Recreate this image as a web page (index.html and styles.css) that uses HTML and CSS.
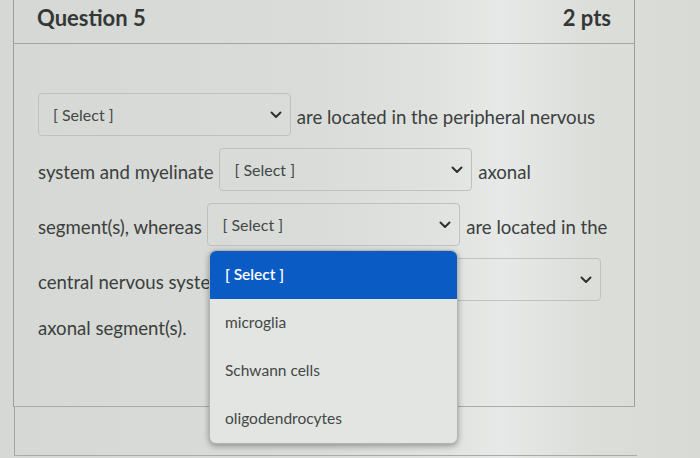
FILE: index.html
```html
<!DOCTYPE html>
<html lang="en">
<head>
<meta charset="utf-8">
<title>Question 5</title>
<link rel="stylesheet" href="styles.css">
</head>
<body>
<div class="card">
  <div class="card-header">
    <span class="title">Question 5</span>
    <span class="pts">2 pts</span>
  </div>
  <div class="card-body">
    <p class="question"><span class="select first"><span class="label">[ Select ]</span><svg class="chev" width="12" height="8" viewBox="0 0 12 8"><polyline points="1.5,1.5 6,6 10.5,1.5"/></svg></span> are located in the peripheral nervous system and myelinate <span class="select"><span class="label">[ Select ]</span><svg class="chev" width="12" height="8" viewBox="0 0 12 8"><polyline points="1.5,1.5 6,6 10.5,1.5"/></svg></span> axonal segment(s), whereas <span class="select"><span class="label">[ Select ]</span><svg class="chev" width="12" height="8" viewBox="0 0 12 8"><polyline points="1.5,1.5 6,6 10.5,1.5"/></svg></span> are located in the central nervous system <span class="select wide"><span class="label"></span><svg class="chev" width="12" height="8" viewBox="0 0 12 8"><polyline points="1.5,1.5 6,6 10.5,1.5"/></svg></span> axonal segment(s).</p>
  </div>
  <ul class="menu">
    <li class="menu-item active">[ Select ]</li>
    <li class="menu-item">microglia</li>
    <li class="menu-item">Schwann cells</li>
    <li class="menu-item">oligodendrocytes</li>
  </ul>
</div>
<div class="card-footer"></div>
</body>
</html>
```

FILE: styles.css
```css
html, body {
  margin: 0;
  padding: 0;
}

body {
  width: 700px;
  height: 458px;
  overflow: hidden;
  font-family: Lato, "Open Sans", sans-serif;
  color: #3b3f3d;
  background: linear-gradient(90deg, #d5d8d4 0%, #d9dcd8 45%, #dfe2de 62%, #e7e9e8 72%, #dcdeda 84%, #d8dad6 100%);
}

.card {
  position: relative;
  margin-left: 13px;
  width: 620px;
  border-left: 1px solid #9d9f9c;
  border-right: 1px solid #9d9f9c;
  border-bottom: 1px solid #a9aba8;
}

.card-header {
  box-sizing: border-box;
  height: 44px;
  display: flex;
  justify-content: space-between;
  align-items: center;
  padding: 0 23px 8px 23px;
  border-bottom: 1px solid #a4a6a3;
  font-size: 22px;
  font-weight: 700;
  color: #333735;
}

.card-body {
  box-sizing: border-box;
  height: 362px;
  padding: 48px 20px 0 24px;
}

.question {
  margin: 0;
  font-size: 18.6px;
  line-height: 32px;
}

.select {
  box-sizing: border-box;
  display: inline-flex;
  align-items: center;
  justify-content: space-between;
  width: 253px;
  height: 43px;
  padding: 0 8px 0 14px;
  margin: 1px 1px 11px;
  border: 1px solid #bfc1be;
  border-radius: 4px;
  vertical-align: middle;
  font-size: 16px;
  line-height: 1;
  color: #444846;
}

.select.first {
  margin-left: 0;
}

.select.wide {
  width: 370px;
}

.chev {
  flex: none;
}

.chev polyline {
  fill: none;
  stroke: #2e3230;
  stroke-width: 2;
  stroke-linecap: round;
  stroke-linejoin: round;
}

.menu {
  position: absolute;
  left: 195px;
  top: 250px;
  width: 247px;
  margin: 0;
  padding: 0;
  list-style: none;
  background: #e3e5e2;
  border: 1px solid #b3b5b2;
  border-radius: 7px;
  overflow: hidden;
  box-shadow: 0 2px 6px rgba(0, 0, 0, 0.35);
}

.menu-item {
  box-sizing: border-box;
  height: 48px;
  display: flex;
  align-items: center;
  padding: 0 0 2px 15px;
  font-size: 15.5px;
  color: #444846;
}

.menu-item.active {
  background: #0b5bc4;
  color: #ffffff;
  font-weight: 600;
}

.card-footer {
  margin-left: 14px;
  width: 622px;
  height: 48px;
  border-left: 1px solid #a3a5a2;
  border-bottom: 1px solid #a9aba8;
}
```
